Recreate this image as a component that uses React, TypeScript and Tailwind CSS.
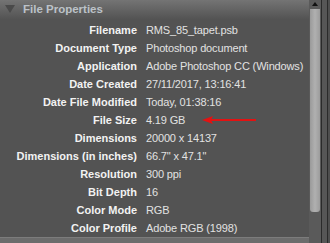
import React from "react";

const rows: [string, string][] = [
  ["Filename", "RMS_85_tapet.psb"],
  ["Document Type", "Photoshop document"],
  ["Application", "Adobe Photoshop CC (Windows)"],
  ["Date Created", "27/11/2017, 13:16:41"],
  ["Date File Modified", "Today, 01:38:16"],
  ["File Size", "4.19 GB"],
  ["Dimensions", "20000 x 14137"],
  ["Dimensions (in inches)", "66.7\" x 47.1\""],
  ["Resolution", "300 ppi"],
  ["Bit Depth", "16"],
  ["Color Mode", "RGB"],
  ["Color Profile", "Adobe RGB (1998)"],
];

export default function App() {
  return (
    <div
      className="w-[330px] h-[243px] flex bg-[#535353] overflow-hidden"
      style={{ fontFamily: '"Liberation Sans", Arial, sans-serif' }}
    >
      <div className="w-[309px] flex flex-col">
        <div className="h-[20px] flex items-center bg-gradient-to-b from-[#747474] to-[#525252]">
          <svg width="23" height="20" viewBox="0 0 23 20" className="shrink-0">
            <polygon points="5,5 15,5 10,13" fill="#4a4a4a" />
          </svg>
          <span className="text-[11.5px] font-bold text-[#bcc2c8] leading-none">File Properties</span>
        </div>
        <div className="flex-1 pt-[1px] overflow-hidden">
          {rows.map(([k, v]) => (
            <div key={k} className="h-[18px] flex items-center text-[11px] leading-none">
              <div className="w-[137px] text-right font-bold text-[#f2f2f2] whitespace-nowrap">{k}</div>
              <div className="ml-[9px] text-[#e2e2e2] whitespace-nowrap flex items-center tracking-[-0.15px]">
                {v}
                {k === "File Size" && (
                  <svg width="55" height="10" viewBox="0 0 55 10" className="ml-[17px]">
                    <line x1="6" y1="5" x2="54" y2="5" stroke="#e31212" strokeWidth="2" />
                    <polygon points="0,5 11,1 9,5 11,9" fill="#e31212" />
                  </svg>
                )}
              </div>
            </div>
          ))}
        </div>
        <div className="h-[6px] bg-[#6c6c6c] border-t border-[#7c7c7c]" />
      </div>
      <div className="w-[12px] flex flex-col bg-[#5a5a5a]">
        <svg width="12" height="9" viewBox="0 0 12 9">
          <polygon points="3,6 9,6 6,2" fill="#111" />
        </svg>
        <div className="mx-[1px] h-[203px] rounded-b-[3px] bg-gradient-to-r from-[#9a9a9a] via-[#b0b0b0] to-[#9c9c9c]" />
      </div>
      <div className="flex-1 flex">
        <div className="w-[1px] bg-[#2a2a2a]" />
        <div className="w-[5px] bg-[#565656]" />
        <div className="w-[1px] bg-[#2a2a2a]" />
        <div className="flex-1 bg-[#4e4e4e]" />
      </div>
    </div>
  );
}
